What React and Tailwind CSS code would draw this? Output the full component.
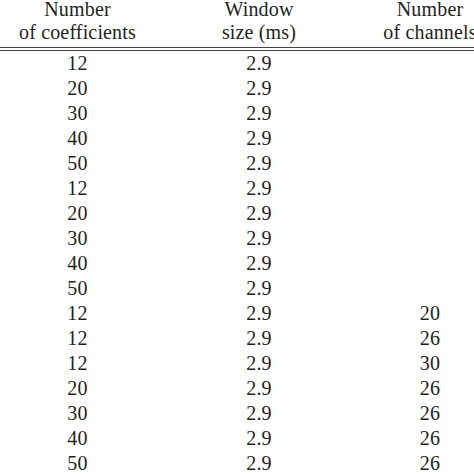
import React from "react";

const rows = [
  ["12", "2.9", ""],
  ["20", "2.9", ""],
  ["30", "2.9", ""],
  ["40", "2.9", ""],
  ["50", "2.9", ""],
  ["12", "2.9", ""],
  ["20", "2.9", ""],
  ["30", "2.9", ""],
  ["40", "2.9", ""],
  ["50", "2.9", ""],
  ["12", "2.9", "20"],
  ["12", "2.9", "26"],
  ["12", "2.9", "30"],
  ["20", "2.9", "26"],
  ["30", "2.9", "26"],
  ["40", "2.9", "26"],
  ["50", "2.9", "26"],
];

function Cell({ children, lh }) {
  return (
    <div className={"font-['Liberation_Serif'] tracking-[0.15px] " + lh}>
      {children}
    </div>
  );
}

export default function App() {
  return (
    <div className="font-['Liberation_Serif']">
      <div className="w-[474px] h-[474px] overflow-hidden bg-white text-[20px] text-[#231f20]">
        <div className="w-[497px]">
          <div className="grid grid-cols-[155px_208px_134px] text-center whitespace-nowrap">
            <div>
              <Cell lh="leading-[18px]">Number</Cell>
              <Cell lh="leading-[28px]">of coefficients</Cell>
            </div>
            <div>
              <Cell lh="leading-[18px]">Window</Cell>
              <Cell lh="leading-[28px]">size (ms)</Cell>
            </div>
            <div>
              <Cell lh="leading-[18px]">Number</Cell>
              <Cell lh="leading-[28px]">of channels</Cell>
            </div>
          </div>
          <div className="mt-[1px] h-[4px] border-t border-b border-[#444]" />
          <div className="flex flex-col">
            {rows.map((r, i) => (
              <div
                key={i}
                className="grid grid-cols-[155px_208px_134px] h-[25px] text-center"
              >
                <Cell lh="leading-[25px]">{r[0]}</Cell>
                <Cell lh="leading-[25px]">{r[1]}</Cell>
                <Cell lh="leading-[25px]">{r[2]}</Cell>
              </div>
            ))}
          </div>
        </div>
      </div>
    </div>
  );
}
